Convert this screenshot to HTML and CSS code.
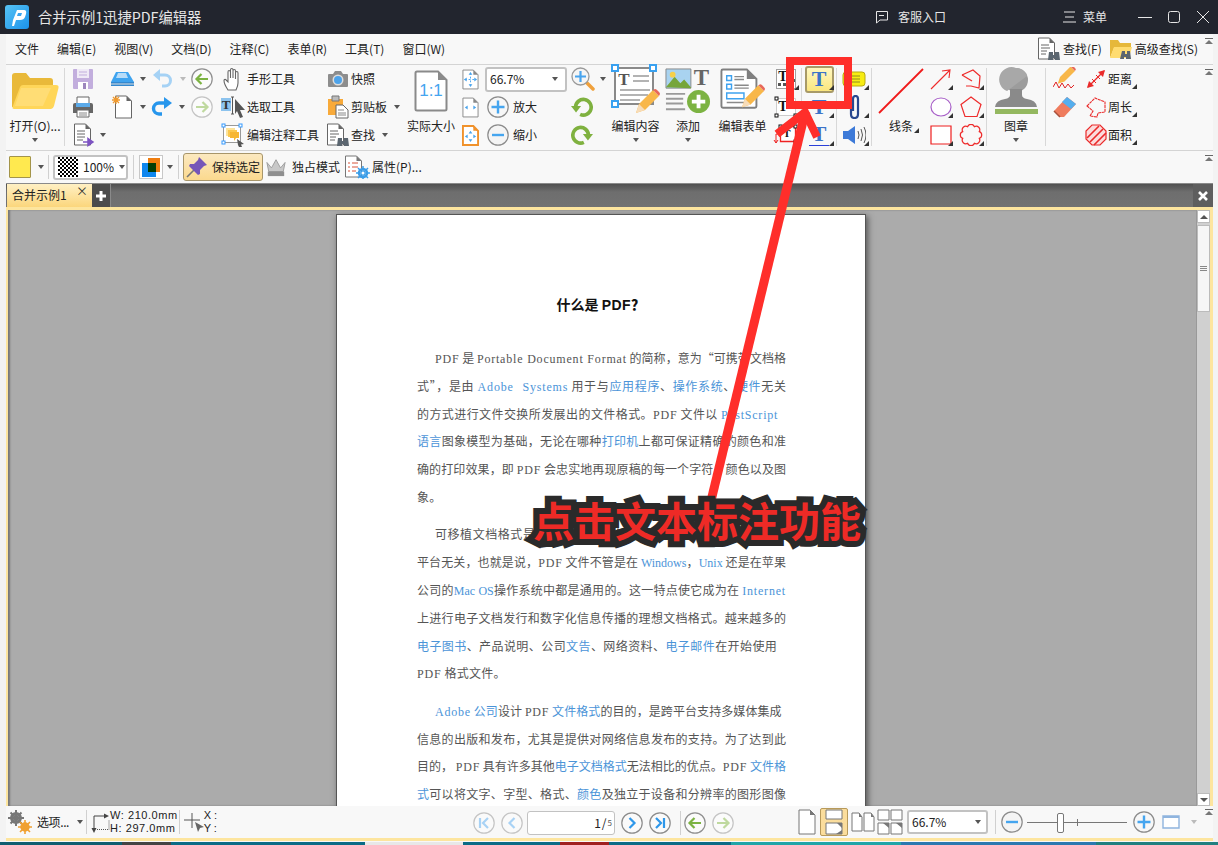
FILE: index.html
```html
<!DOCTYPE html>
<html lang="zh-CN">
<head>
<meta charset="utf-8">
<title>合并示例1迅捷PDF编辑器</title>
<link rel="stylesheet" href="styles.css">
</head>
<body>
<svg class="defs" width="0" height="0">
<defs>
<symbol id="folder" viewBox="0 0 48 38"><path d="M1 35V4q0-3 3-3h11l4 5h20q3 0 3 3v6H12L6 35z" fill="#e9b93a"/><path d="M3 37q-2 0-1.500-2L9 15q1-2 3-2h33q3 0 2.500 3L43 34q-1 3-3 3z" fill="#ffd659"/><path d="M10 16h30l-8 18H4z" fill="#ffe189" opacity=".6"/></symbol>
<symbol id="save" viewBox="0 0 22 22"><path d="M1 2q0-1 1-1h18q1 0 1 1v18q0 1-1 1H2q-1 0-1-1z" fill="#c2aedd"/><path d="M5 1h12v9H5z" fill="#efeaf6"/><path d="M7 4h8M7 7h8" stroke="#c2aedd"/><path d="M6 14h10v7H6z" fill="#fff"/><path d="M11 15h3v6h-3z" fill="#9d87bd"/></symbol>
<symbol id="print" viewBox="0 0 22 22"><path d="M5 1h12v7H5z" fill="#fff" stroke="#666"/><path d="M1 9q0-2 2-2h16q2 0 2 2v8H1z" fill="#666"/><path d="M4 7h14v4H4z" fill="#5aa9e8"/><path d="M5 14h12v7H5z" fill="#fff" stroke="#666"/><path d="M7 17h8M7 19h8" stroke="#888"/></symbol>
<symbol id="export" viewBox="0 0 22 24"><path d="M1.500 1h11l5 5v16h-16z" fill="#fff" stroke="#666"/><path d="M12.500 1l5 5h-5z" fill="#666"/><path d="M4 8h8M4 11h8M4 14h8M4 17h6" stroke="#666"/><path d="M10 19h8M15 15.500l5 3.500-5 3.500z" fill="#7d54c2" stroke="#7d54c2" stroke-width="1.500"/></symbol>
<symbol id="scan" viewBox="0 0 25 16"><path d="M6 1h12l6 10H1z" fill="#3ea3ef"/><path d="M8 2h8l2 5H6z" fill="#b8dcf8"/><path d="M1 11h23v4H1z" fill="#3388cf"/><path d="M1 13h23" stroke="#ddd"/></symbol>
<symbol id="newdoc" viewBox="0 0 22 24"><path d="M4.500 1h11l5 5v17h-16z" fill="#fff" stroke="#666"/><path d="M15.500 1l5 5h-5z" fill="#666"/><path d="M5 1v8M1 5h8M2 2l6 6M8 2L2 8" stroke="#f0992d" stroke-width="1.300"/></symbol>
<symbol id="undo" viewBox="0 0 22 20"><path d="M6 6h7a5.500 5.500 0 0 1 0 11h-3" fill="none" stroke="#a5d2f5" stroke-width="3"/><path d="M8 0v12L1 6z" fill="#a5d2f5"/></symbol>
<symbol id="redo" viewBox="0 0 22 20"><path d="M15 6H8a5.500 5.500 0 0 0 0 11h3" fill="none" stroke="#2796ec" stroke-width="3.400"/><path d="M13 0v12l8-6z" fill="#2796ec"/></symbol>
<symbol id="back" viewBox="0 0 22 22"><circle cx="11" cy="11" r="10.200" fill="#fbfbfb" stroke="#8f8f8f" stroke-width="1.200"/><path d="M17 11H6M10.500 6L5.500 11l5 5" fill="none" stroke="#7cb342" stroke-width="2.200"/></symbol>
<symbol id="forward" viewBox="0 0 22 22"><circle cx="11" cy="11" r="10.200" fill="#fbfbfb" stroke="#c4c4c4" stroke-width="1.200"/><path d="M5 11h11M11.500 6l5 5-5 5" fill="none" stroke="#bfd99f" stroke-width="2.200"/></symbol>
<symbol id="hand" viewBox="0 0 20 24"><path d="M5 23C3 20 1 16 1 13.500c0-1.500 2-1.500 2.500 0L5 15V5c0-2 2-2 2.500 0v6V3c0-2 2.500-2 2.500 0v8V4c0-2 2.500-2 2.500 0v8V6c0-2 2.500-2 2.500 0v10c0 3-1 5-2 7z" fill="#fff" stroke="#666" stroke-width="1.100"/></symbol>
<symbol id="select" viewBox="0 0 25 22"><path d="M0 2h10v13H0z" fill="#8cc3ee"/><text x="5" y="13" class="svgt" font-size="13" text-anchor="middle" fill="#333">T</text><path d="M11.500 1v17M10 1h3M10 18h3" stroke="#555"/><path d="M14 3l10 11-5 0 3 7-3 1-3-7-2 3z" fill="#555"/></symbol>
<symbol id="annot" viewBox="0 0 24 24"><path d="M2.500 2.500h17v17h-17z" fill="#fff" stroke="#999"/><rect x="1" y="1" width="3" height="3" fill="#fff" stroke="#39f"/><rect x="18" y="1" width="3" height="3" fill="#fff" stroke="#39f"/><rect x="1" y="18" width="3" height="3" fill="#fff" stroke="#39f"/><path d="M5 5h9v8H5z" fill="#fde39a"/><path d="M7 7h9v7H7z" fill="#fbc84e"/><path d="M9 9h9v6h-3l-2 3v-3H9z" fill="#f7b733"/><path d="M16 16l7 5-3 .500 1 2.500h-3l-1-2z" fill="#555"/></symbol>
<symbol id="camera" viewBox="0 0 22 18"><path d="M1 5q0-1 1-1h4l2-3h6l2 3h4q1 0 1 1v11q0 1-1 1H2q-1 0-1-1z" fill="#8d8d8d"/><circle cx="11" cy="10" r="5.500" fill="#ddd"/><circle cx="11" cy="10" r="4" fill="#4da3ea"/></symbol>
<symbol id="clip" viewBox="0 0 22 24"><path d="M1 4h15v16H1z" fill="#f8aa3a"/><path d="M5 1h7v5H5z" fill="#bbb" stroke="#777"/><path d="M9 10h7l5 5v8H9z" fill="#fff" stroke="#666"/><path d="M11 15h6M11 18h8M11 20h8" stroke="#888"/></symbol>
<symbol id="find" viewBox="0 0 24 24"><path d="M1.500 1h11l5 5v16h-16z" fill="#fff" stroke="#666"/><path d="M12.500 1l5 5h-5z" fill="#666"/><path d="M4 8h8M4 11h9M4 14h6M4 17h5" stroke="#666"/><path d="M12 15h4v3h2v-3h4l1 8h-5v-2h-2v2h-5z" fill="#5b6670"/></symbol>
<symbol id="oneone" viewBox="0 0 34 42"><path d="M1.500 3Q1.500 1.500 3 1.500h21l8.500 8.500v29q0 1.500-1.500 1.500H3Q1.500 40.500 1.500 39z" fill="#fff" stroke="#8a8a8a" stroke-width="2"/><path d="M24 1.500l8.500 8.500H24z" fill="#8a8a8a"/></symbol>
<symbol id="fitall" viewBox="0 0 18 22"><path d="M1 1h11l5 5v15H1z" fill="#fff" stroke="#888"/><path d="M12 1l5 5h-5z" fill="#888"/><path d="M9 4v13M3 11h12" stroke="#48a4ee" stroke-dasharray="2 2"/><path d="M9 3l-2 3h4zM9 19l-2-3h4zM2 11l3-2v4zM16 11l-3-2v4z" fill="#48a4ee"/></symbol>
<symbol id="fitw" viewBox="0 0 18 22"><path d="M1 1h11l5 5v15H1z" fill="#fff" stroke="#888"/><path d="M12 1l5 5h-5z" fill="#888"/><path d="M3 11l3-2v4zM15 11l-3-2v4z" fill="#48a4ee"/></symbol>
<symbol id="fito" viewBox="0 0 18 22"><path d="M1 1h11l5 5v15H1z" fill="#fff" stroke="#f0922c" stroke-width="2"/><path d="M12 1l5 5h-5z" fill="#f0922c"/><path d="M9 6l-2 3h4zM9 18l-2-3h4zM3 12l3-2v4zM15 12l-3-2v4z" fill="#48a4ee"/></symbol>
<symbol id="zoomin" viewBox="0 0 24 24"><path d="M14 14l8 8" stroke="#f0a13c" stroke-width="3.500" stroke-linecap="round"/><circle cx="9.500" cy="9.500" r="8.500" fill="#f5f5f5" stroke="#999" stroke-width="1.300"/><path d="M9.500 4v11M4 9.500h11" stroke="#48a4ee" stroke-width="2.200"/></symbol>
<symbol id="plusc" viewBox="0 0 22 22"><circle cx="11" cy="11" r="10.200" fill="#f7f7f7" stroke="#8b8b8b" stroke-width="1.200"/><path d="M11 4.500v13M4.500 11h13" stroke="#45a5ef" stroke-width="2.400"/></symbol>
<symbol id="minusc" viewBox="0 0 22 22"><circle cx="11" cy="11" r="10.200" fill="#f4f4f4" stroke="#8b8b8b" stroke-width="1.200"/><path d="M5 11h12" stroke="#45a5ef" stroke-width="2.400"/></symbol>
<symbol id="rotl" viewBox="0 0 24 24"><path d="M5 12a8.500 8.500 0 1 1 5 8" fill="none" stroke="#7fb13f" stroke-width="4"/><path d="M0 11h11l-5.500 7z" fill="#7fb13f"/></symbol>
<symbol id="rotr" viewBox="0 0 24 24"><path d="M19 12a8.500 8.500 0 1 0-5 8" fill="none" stroke="#7fb13f" stroke-width="4"/><path d="M24 11H13l5.500 7z" fill="#7fb13f"/></symbol>
<symbol id="editc" viewBox="0 0 50 54"><path d="M4 4h38v36H4z" fill="#fff" stroke="#8a8a8a" stroke-width="2"/><rect x="1" y="1" width="6" height="6" fill="#fff" stroke="#39a1f0" stroke-width="2"/><rect x="39" y="1" width="6" height="6" fill="#fff" stroke="#39a1f0" stroke-width="2"/><rect x="1" y="37" width="6" height="6" fill="#fff" stroke="#39a1f0" stroke-width="2"/><text x="13" y="21" class="svgt" font-size="17" text-anchor="middle" fill="#555">T</text><path d="M22 12h16M22 17h16M9 26h30M9 31h28M9 36h20" stroke="#9a9a9a" stroke-width="1.600"/><g transform="translate(24 24)"><path d="M1 25l3-9L18 2l6 6L10 22z" fill="#f8b74a"/><path d="M1 25l3-9 6 6z" fill="#f7dcb8"/><path d="M18 2l2-1q1 0 2 1l2 2q1 1 1 2l-1 2z" fill="#e8685a"/></g></symbol>
<symbol id="addc" viewBox="0 0 48 48"><path d="M1 1h26v20H1z" fill="#a9d3f0" stroke="#888"/><path d="M1 20l9-11 6 7 4-4 7 8v1z" fill="#76a53a"/><circle cx="8" cy="7" r="3" fill="#f7d04a"/><text x="38" y="18" class="svgt" font-size="24" text-anchor="middle" fill="#666">T</text><path d="M1 27h20M1 32h18M1 37h18M1 43h20" stroke="#9a9a9a" stroke-width="2"/><circle cx="35" cy="35" r="12" fill="#7cb342"/><path d="M35 28v14M28 35h14" stroke="#fff" stroke-width="4"/></symbol>
<symbol id="formc" viewBox="0 0 48 48"><path d="M1.500 3q0-1.500 1.500-1.500h25l10 10V40q0 1.500-1.500 1.500H3q-1.500 0-1.500-1.500z" fill="#fff" stroke="#808080" stroke-width="2"/><path d="M28 1.500l10 10H28z" fill="#808080"/><path d="M7 8h5v5H7zM7 17h5v5H7zM7 26h18v6H7z" fill="none" stroke="#3ea2ef" stroke-width="1.500"/><path d="M15 9h10M15 12h10M15 18h15M15 21h15M7 36h24" stroke="#8a8a8a" stroke-width="1.500"/><g transform="translate(22 16)"><path d="M1 25l3-9L18 2l6 6L10 22z" fill="#f8b74a"/><path d="M1 25l3-9 6 6z" fill="#f7dcb8"/><path d="M18 2l2-1q1 0 2 1l2 2q1 1 1 2l-1 2z" fill="#e8685a"/></g></symbol>
<symbol id="tqr" viewBox="0 0 24 24"><path d="M2.500 2.500h19v19h-19z" fill="#fff" stroke="#444" stroke-dasharray="1 1"/><text x="9" y="14" class="svgt" font-size="14" text-anchor="middle" font-weight="700" fill="#111">T</text><path d="M4 16h3v3H4zM9 16h3v3H9zM14 12h3v3h-3zM14 17h3v3h-3zM19 12h2v3h-2z" fill="#555"/></symbol>
<symbol id="tbox" viewBox="0 0 24 22"><path d="M2.500 2.500h19v17h-19z" fill="#fff" stroke="#ccc"/><rect x="1" y="1" width="3" height="3" fill="#fff" stroke="#111"/><rect x="20" y="18" width="3" height="3" fill="#fff" stroke="#111"/><rect x="1" y="18" width="3" height="3" fill="#fff" stroke="#111"/><text x="9" y="15" class="svgt" font-size="14" font-weight="700" text-anchor="middle" fill="#111">T</text></symbol>
<symbol id="tcall" viewBox="0 0 26 24"><path d="M7.500 3.500h15v15h-15z" fill="#fff" stroke="#e22" stroke-width="1.300"/><rect x="6" y="2" width="3" height="3" fill="#fff" stroke="#111"/><rect x="21" y="2" width="3" height="3" fill="#fff" stroke="#111"/><rect x="21" y="17" width="3" height="3" fill="#fff" stroke="#111"/><text x="14" y="14" class="svgt" font-size="11" font-weight="700" text-anchor="middle" fill="#111">T</text><path d="M7 11H3v9M1 17l2 3 2-3" fill="none" stroke="#e22"/></symbol>
<symbol id="tblue" viewBox="0 0 20 20"><text x="10" y="17" class="svgt" font-size="22" font-weight="700" text-anchor="middle" fill="#3c74c8">T</text></symbol>
<symbol id="note" viewBox="0 0 24 16"><path d="M4 1h16q3 0 3 3v8q0 3-3 3H4q-3 0-3-3V4q0-3 3-3z" fill="#f7ec12" stroke="#b8aa10"/><path d="M7 5h11M7 8h11M7 11h11" stroke="#8f8a20"/></symbol>
<symbol id="paper" viewBox="0 0 12 24"><path d="M3 7v12q0 4 3.500 4t3.500-4V4q0-3-2.500-3T5 4v12" fill="none" stroke="#28478f" stroke-width="2.200"/></symbol>
<symbol id="sound" viewBox="0 0 24 20"><path d="M1 6h5l7-5v18l-7-5H1z" fill="#3d7ad8"/><path d="M16 6q2 4 0 8M19 4q3 6 0 12M22 2q4 8 0 16" fill="none" stroke="#555"/></symbol>
<symbol id="line" viewBox="0 0 46 46"><path d="M1 45L45 1" stroke="#f01a1a" stroke-width="1.800"/></symbol>
<symbol id="arr" viewBox="0 0 22 22"><path d="M1 21L20 2M12 3l8-1-1 8" fill="none" stroke="#ee2b2b" stroke-width="1.100"/></symbol>
<symbol id="poly1" viewBox="0 0 22 22"><path d="M2 7l11-5 7 6-1 12-8-2-5 0" fill="none" stroke="#ee2b2b" stroke-width="1.200"/><path d="M2 7l10 6" stroke="#ee2b2b" stroke-width="1.200"/></symbol>
<symbol id="ellipse" viewBox="0 0 22 20"><ellipse cx="11" cy="10" rx="10" ry="9" fill="#fff" stroke="#a860c8" stroke-width="1.200"/></symbol>
<symbol id="penta" viewBox="0 0 22 22"><path d="M11 1l10 7.500-4 12H5L1 8.500z" fill="none" stroke="#ee2b2b" stroke-width="1.200"/></symbol>
<symbol id="square" viewBox="0 0 22 20"><path d="M1 1h20v18H1z" fill="#fff" stroke="#ee1f1f" stroke-width="1.200"/></symbol>
<symbol id="cloud" viewBox="0 0 24 22"><path d="M20.300 7.600A3.600 3.600 0 0 1 20.300 14.400A3.600 3.600 0 0 1 15.400 19.300A3.600 3.600 0 0 1 8.600 19.300A3.600 3.600 0 0 1 3.700 14.400A3.600 3.600 0 0 1 3.700 7.600A3.600 3.600 0 0 1 8.600 2.700A3.600 3.600 0 0 1 15.400 2.700A3.600 3.600 0 0 1 20.300 7.600z" fill="none" stroke="#ee2b2b" stroke-width="1.200"/></symbol>
<symbol id="stamp" viewBox="0 0 46 48"><circle cx="23" cy="13" r="12" fill="#9c9c9c"/><path d="M23 1a12 12 0 0 1 11 8L14 24a12 12 0 0 1 9-23z" fill="#a8a8a8"/><path d="M17 22h12v6q0 3 5 4 9 1 10 8H2q1-7 10-8 5-1 5-4z" fill="#8a8a8a"/><path d="M2 42h43v5H2z" fill="#94b860"/></symbol>
<symbol id="squig" viewBox="0 0 24 24"><g transform="translate(4 -2) scale(.75)"><path d="M1 25l3-9L18 2l6 6L10 22z" fill="#f8b74a"/><path d="M18 2l2-1q1 0 2 1l2 2q1 1 1 2l-1 2z" fill="#e8685a"/></g><path d="M0 20l3-5 3 6 3-5 3 5 3-4 3 4 3-3" fill="none" stroke="#e02222"/></symbol>
<symbol id="eraser" viewBox="0 0 24 22"><path d="M1 15L14 1l9 7L11 21H7z" fill="#ef7c5e"/><path d="M14 1l9 7-5 5-9-7z" fill="#55aeed"/><path d="M1 15l6 6" stroke="#a9503b" stroke-width="1.500"/></symbol>
<symbol id="dist" viewBox="0 0 20 20"><path d="M2 18L18 2" stroke="#ea2a2a" stroke-width="1.300"/><path d="M1 19l2-7 5 5zM19 1l-2 7-5-5z" fill="#ea2a2a"/><path d="M6 10l4 4M10 6l4 4" stroke="#ea2a2a"/></symbol>
<symbol id="peri" viewBox="0 0 22 22"><path d="M2 10l8-8 10 4 0 10-7 1-1 4-7-1 3-5z" fill="none" stroke="#ea2a2a" stroke-width="1.100" stroke-dasharray="3 .6"/></symbol>
<symbol id="area" viewBox="0 0 22 22"><path d="M7 1h8l6 6v8l-6 6H7l-6-6V7z" fill="#fbdcdc" stroke="#ea2a2a" stroke-width="1.200"/><path d="M2 14L14 2M5 18L18 5M9 21L21 9" stroke="#ea2a2a" stroke-width="1.600"/></symbol>
<symbol id="pin" viewBox="0 0 22 22"><path d="M1 21l8-8" stroke="#777" stroke-width="1.600"/><path d="M13 1l8 8-3 1-4 4 0 4-2 1-9-9 1-2h4l4-4z" fill="#7656b8"/></symbol>
<symbol id="crown" viewBox="0 0 24 22"><path d="M2 6l5 6 5-9 5 9 5-6-2 10H4z" fill="#c8c8c8" stroke="#999"/><path d="M3 16h18v5H3z" fill="#8f8f8f"/></symbol>
<symbol id="props" viewBox="0 0 26 24"><path d="M1.500 1h11l5 5v16h-16z" fill="#fff" stroke="#777"/><path d="M12.500 1l5 5h-5z" fill="#777"/><path d="M4 8h2M8 8h6M4 12h2M8 12h6M4 16h2M8 16h4" stroke="#d8553b"/><circle cx="19" cy="18" r="4" fill="none" stroke="#3b9de8" stroke-width="2.500"/><path d="M19 11v14M12 18h14M14 13l10 10M24 13L14 23" stroke="#3b9de8" stroke-width="1.500"/><circle cx="19" cy="18" r="1.500" fill="#fff"/></symbol>
<symbol id="gears" viewBox="0 0 24 24"><circle cx="8" cy="8" r="4.500" fill="none" stroke="#777" stroke-width="3"/><path d="M8 0v16M0 8h16M2.500 2.500l11 11M13.500 2.500l-11 11" stroke="#777" stroke-width="2"/><circle cx="17" cy="17" r="3.500" fill="none" stroke="#f0a030" stroke-width="2.500"/><path d="M17 10v14M10 17h14M12 12l10 10M22 12L12 22" stroke="#f0a030" stroke-width="1.600"/></symbol>
<symbol id="dims" viewBox="0 0 20 22"><path d="M3 18V5h11" fill="none" stroke="#444"/><path d="M13 2.500l5 2.500-5 2.500zM.5 17l2.500 5 2.500-5z" fill="#444"/><path d="M6 18.500h12V9" fill="none" stroke="#555" stroke-dasharray="1 1"/></symbol>
<symbol id="cross" viewBox="0 0 22 20"><path d="M8 1v15M0 8h16" stroke="#555"/><path d="M11 10l9 5-4 1-2 4z" fill="#666"/></symbol>
<symbol id="first" viewBox="0 0 22 22"><circle cx="11" cy="11" r="10.200" fill="#fafafa" stroke="#c4c4c4" stroke-width="1.200"/><path d="M7 6v10M15 6l-5 5 5 5" fill="none" stroke="#a8d2f5" stroke-width="2.200"/></symbol>
<symbol id="prev" viewBox="0 0 22 22"><circle cx="11" cy="11" r="10.200" fill="#fafafa" stroke="#c4c4c4" stroke-width="1.200"/><path d="M13.500 6l-5 5 5 5" fill="none" stroke="#a8d2f5" stroke-width="2.200"/></symbol>
<symbol id="next" viewBox="0 0 22 22"><circle cx="11" cy="11" r="10.200" fill="#fafafa" stroke="#8b8b8b" stroke-width="1.200"/><path d="M8.500 6l5 5-5 5" fill="none" stroke="#2e97ea" stroke-width="2.200"/></symbol>
<symbol id="last" viewBox="0 0 22 22"><circle cx="11" cy="11" r="10.200" fill="#fafafa" stroke="#8b8b8b" stroke-width="1.200"/><path d="M15 6v10M7 6l5 5-5 5" fill="none" stroke="#2e97ea" stroke-width="2.200"/></symbol>
<symbol id="pg1" viewBox="0 0 18 26"><path d="M1 1h11l5 5v19H1z" fill="#fff" stroke="#777"/><path d="M12 1l5 5h-5z" fill="#777"/></symbol>
<symbol id="pgcont" viewBox="0 0 18 26"><path d="M1 1h16v9H1zM1 14h16v11H1z" fill="#fff" stroke="#777"/><path d="M12 14l5 5v-5zM11 25h6v-4z" fill="#777"/></symbol>
<symbol id="pg2" viewBox="0 0 24 20"><path d="M1 1h7l3 4v14H1zM13 1h7l3 4v14H13z" fill="#fff" stroke="#777"/><path d="M8 1l3 4H8zM20 1l3 4h-3z" fill="#777"/></symbol>
<symbol id="pg4" viewBox="0 0 26 26"><path d="M1 1h11v10H1zM14 1h11v10H14zM1 14h11v11H1zM14 14h11v11H14z" fill="#fff" stroke="#777"/><path d="M6 14l6 5v-5zM19 14l6 5v-5z" fill="#777"/></symbol>
<symbol id="win" viewBox="0 0 18 14"><path d="M1 1h16v12H1z" fill="#fff" stroke="#8fb4de" stroke-width="1.400"/><path d="M1 2h16" stroke="#8fb4de" stroke-width="2"/></symbol>
</defs>
</svg>

<div class="app">
  <header class="titlebar">
    <div class="logo"><svg width="24" height="24" viewBox="0 0 24 24"><path d="M7 21l1-6 4-10h7q3 0 2 4l-1 3q-1 3-5 3h-4l-2 6z" fill="#fff"/><path d="M13 8h4l-1 3h-4z" fill="#3ba4ee"/></svg></div>
    <span class="apptitle">合并示例1迅捷PDF编辑器</span>
    <div class="winright">
      <span class="titleact act1"><svg width="14" height="14" viewBox="0 0 14 14"><path d="M1.500 1.500h11v8.500H5l-3.500 3z" fill="none" stroke="#e6e6e6"/><path d="M4 5.500h5" stroke="#e6e6e6"/></svg>客服入口</span>
      <span class="titleact act2"><svg width="13" height="12" viewBox="0 0 13 12"><path d="M1 1h11M2 6h9M0 11h13" stroke="#e6e6e6"/></svg>菜单</span>
      <svg class="wbtn" width="14" height="14" viewBox="0 0 14 14"><path d="M0 7.500h14" stroke="#e6e6e6"/></svg>
      <svg class="wbtn" width="14" height="14" viewBox="0 0 14 14"><rect x="1.500" y="1.500" width="11" height="11" rx="2" fill="none" stroke="#e6e6e6"/></svg>
      <svg class="wbtn" width="14" height="14" viewBox="0 0 14 14"><path d="M1 1l12 12M13 1L1 13" stroke="#e6e6e6"/></svg>
    </div>
  </header>

  <div class="shell">
    <nav class="menubar">
      <span>文件</span><span>编辑(E)</span><span>视图(V)</span><span>文档(D)</span><span>注释(C)</span><span>表单(R)</span><span>工具(T)</span><span>窗口(W)</span>
      <div class="menuright">
        <svg width="24" height="24"><use href="#find"/></svg><span>查找(F)</span>
        <svg class="gap2" width="24" height="22" viewBox="0 0 24 22"><path d="M1 20V2h8l2 3h11v5H5z" fill="#e6b83a"/><path d="M1 20l4-11h18l-3 11z" fill="#ffdc70"/><path d="M13 13h3v3h2v-3h3l1 8h-5v-2h-2v2h-4z" fill="#5b6670"/></svg><span>高级查找(S)</span>
      </div>
      <i class="collapse"></i>
    </nav>

    <section class="ribbon">
      <div class="big span3"><div class="bigicon"><svg width="48" height="38"><use href="#folder"/></svg></div><span>打开(O)...</span><i class="caret"></i></div>
      <div class="sep span3"></div>

      <div class="cell pl7"><svg width="22" height="22"><use href="#save"/></svg></div>
      <div class="cell pl7"><svg width="22" height="22"><use href="#print"/></svg></div>
      <div class="cell pl8"><svg width="22" height="24"><use href="#export"/></svg><i class="caret ml5"></i></div>

      <div class="cell"><svg width="25" height="16"><use href="#scan"/></svg><i class="caret ml5"></i></div>
      <div class="cell"><svg class="ml1" width="22" height="24"><use href="#newdoc"/></svg><i class="caret ml7"></i></div>
      <div class="cell"></div>

      <div class="cell"><svg class="ml2" width="22" height="20"><use href="#undo"/></svg><i class="caret pale ml6"></i></div>
      <div class="cell"><svg class="ml1" width="22" height="20"><use href="#redo"/></svg><i class="caret ml6"></i></div>
      <div class="cell"></div>

      <div class="cell ctr"><svg width="22" height="22"><use href="#back"/></svg></div>
      <div class="cell ctr"><svg width="22" height="22"><use href="#forward"/></svg></div>
      <div class="cell"></div>

      <div class="cell lab"><span class="ibox i28"><svg width="20" height="24"><use href="#hand"/></svg></span><span>手形工具</span></div>
      <div class="cell lab"><span class="ibox i28"><svg width="25" height="22"><use href="#select"/></svg></span><span>选取工具</span></div>
      <div class="cell lab"><span class="ibox i28"><svg width="24" height="24"><use href="#annot"/></svg></span><span>编辑注释工具</span></div>

      <div class="cell lab2"><span class="ibox i26"><svg width="22" height="18"><use href="#camera"/></svg></span><span>快照</span></div>
      <div class="cell lab2"><span class="ibox i26"><svg width="22" height="24"><use href="#clip"/></svg></span><span>剪贴板</span><i class="caret ml7"></i></div>
      <div class="cell lab2"><span class="ibox i26"><svg width="24" height="24"><use href="#find"/></svg></span><span>查找</span><i class="caret ml7"></i></div>

      <div class="big span3 nocaret"><div class="bigicon"><svg class="oneone" width="34" height="42"><use href="#oneone"/></svg><b class="ratio">1:1</b></div><span>实际大小</span></div>

      <div class="cell ctr"><svg width="17" height="21"><use href="#fitall"/></svg></div>
      <div class="cell ctr"><svg width="17" height="21"><use href="#fitw"/></svg></div>
      <div class="cell ctr"><svg width="17" height="21"><use href="#fito"/></svg></div>

      <div class="cell pl1"><div class="combo zoomcombo"><span>66.7%</span><i class="caret"></i></div></div>
      <div class="cell pl3"><svg width="22" height="22"><use href="#plusc"/></svg><span class="ml4">放大</span></div>
      <div class="cell pl3"><svg width="22" height="22"><use href="#minusc"/></svg><span class="ml4">缩小</span></div>

      <div class="cell pl2"><svg width="24" height="24"><use href="#zoomin"/></svg><i class="caret ml5"></i></div>
      <div class="cell pl2"><svg width="22" height="22"><use href="#rotl"/></svg></div>
      <div class="cell pl2"><svg width="22" height="22"><use href="#rotr"/></svg></div>

      <div class="big span3"><div class="bigicon"><svg width="50" height="54"><use href="#editc"/></svg></div><span>编辑内容</span><i class="caret"></i></div>
      <div class="big span3"><div class="bigicon"><svg width="46" height="46"><use href="#addc"/></svg></div><span>添加</span><i class="caret"></i></div>
      <div class="big span3 nocaret"><div class="bigicon"><svg width="46" height="46"><use href="#formc"/></svg></div><span>编辑表单</span></div>

      <div class="cell ctr corner"><svg width="24" height="24"><use href="#tqr"/></svg></div>
      <div class="cell ctr corner"><svg width="24" height="22"><use href="#tbox"/></svg></div>
      <div class="cell ctr corner"><svg width="26" height="24"><use href="#tcall"/></svg></div>
      <div class="sep span3"></div>

      <div class="cell ctr corner"><span class="activebtn"><svg width="20" height="20"><use href="#tblue"/></svg></span></div>
      <div class="cell ctr corner"><svg width="20" height="20"><use href="#tblue"/></svg></div>
      <div class="cell ctr corner"><span class="tunder"><svg width="20" height="20"><use href="#tblue"/></svg></span></div>
      <div class="sep span3"></div>

      <div class="cell ctr corner"><svg width="24" height="16"><use href="#note"/></svg></div>
      <div class="cell ctr corner"><svg width="12" height="24"><use href="#paper"/></svg></div>
      <div class="cell ctr corner"><svg width="24" height="20"><use href="#sound"/></svg></div>
      <div class="sep span3"></div>

      <div class="big span3 nocaret corner2"><div class="bigicon"><svg width="46" height="46"><use href="#line"/></svg></div><span>线条</span></div>

      <div class="cell ctr corner"><svg width="22" height="22"><use href="#arr"/></svg></div>
      <div class="cell ctr corner"><svg width="22" height="20"><use href="#ellipse"/></svg></div>
      <div class="cell ctr corner"><svg width="22" height="20"><use href="#square"/></svg></div>

      <div class="cell ctr corner"><svg width="22" height="22"><use href="#poly1"/></svg></div>
      <div class="cell ctr corner"><svg width="22" height="22"><use href="#penta"/></svg></div>
      <div class="cell ctr corner"><svg width="24" height="22"><use href="#cloud"/></svg></div>
      <div class="sep span3"></div>

      <div class="big span3"><div class="bigicon"><svg width="46" height="48"><use href="#stamp"/></svg></div><span>图章</span><i class="caret"></i></div>
      <div class="sep span3"></div>

      <div class="cell ctr"><svg width="24" height="24"><use href="#squig"/></svg></div>
      <div class="cell ctr"><svg width="24" height="22"><use href="#eraser"/></svg></div>
      <div class="cell"></div>

      <div class="cell meas"><span class="ibox i25"><svg width="20" height="20"><use href="#dist"/></svg></span><span>距离</span></div>
      <div class="cell meas"><span class="ibox i25"><svg width="22" height="22"><use href="#peri"/></svg></span><span>周长</span></div>
      <div class="cell meas"><span class="ibox i25"><svg width="22" height="22"><use href="#area"/></svg></span><span>面积</span></div>
      <i class="collapse"></i>
    </section>

    <section class="propbar">
      <span class="swatch"></span><i class="caret ml7"></i><span class="vsep v1"></span>
      <div class="combo opacity"><svg width="20" height="20" viewBox="0 0 20 20"><defs><pattern id="chk" width="4" height="4" patternUnits="userSpaceOnUse"><path d="M0 0h2v2H0zM2 2h2v2H2z" fill="#000"/></pattern></defs><rect width="20" height="20" fill="url(#chk)"/></svg><span>100%</span><i class="caret"></i></div>
      <span class="vsep v2"></span>
      <span class="colorbox"><svg width="20" height="20" viewBox="0 0 20 20"><path d="M7 1h12v14H7z" fill="#f07d0e"/><path d="M1 6h14v14H1z" fill="#1087ee"/><path d="M7 6h8v9H7z" fill="#033d05"/></svg></span><i class="caret ml4"></i><span class="vsep v3"></span>
      <button class="keep"><svg width="22" height="22"><use href="#pin"/></svg><span>保持选定</span></button>
      <svg class="crown" width="22" height="20"><use href="#crown"/></svg><span class="ml5">独占模式</span>
      <svg class="props" width="26" height="24"><use href="#props"/></svg><span>属性(P)...</span>
      <i class="collapse"></i>
    </section>

    <div class="tabbar">
      <div class="tab"><span>合并示例1</span><em>×</em></div>
      <div class="addtab"><svg width="10" height="10" viewBox="0 0 10 10"><path d="M5 0v10M0 5h10" stroke="#fff" stroke-width="3"/></svg></div>
      <div class="tabfill"></div>
      <div class="closetab"><svg width="10" height="10" viewBox="0 0 10 10"><path d="M1 1l8 8M9 1l-8 8" stroke="#fff" stroke-width="2.600"/></svg></div>
    </div>

    <main class="workspace">
      <div class="canvas">
        <article class="page">
          <h1>什么是 <b>PDF？</b></h1>
          <div class="para">
            <p class="first"><span class="l">PDF</span> 是 <span class="l">Portable Document Format</span> 的简称，意为“可携带文档格</p>
            <p>式”，是由 <a class="l">Adobe &nbsp;Systems</a> 用于与<a>应用程序</a>、<a>操作系统</a>、<a>硬件</a>无关</p>
            <p class="free wide"><span>的方式进行文件交换所发展出的文件格式。</span><span class="l">PDF</span> 文件以 <a class="l">PostScript</a></p>
            <p><a>语言</a>图象模型为基础，无论在哪种<a>打印机</a>上都可保证精确的颜色和准</p>
            <p>确的打印效果，即 <span class="l">PDF</span> 会忠实地再现原稿的每一个字符、颜色以及图</p>
            <p class="free">象。</p>
          </div>
          <div class="para">
            <p class="first">可移植文档格式是一种电子文件格式。这种文件格式与操作系统</p>
            <p>平台无关，也就是说，<span class="l">PDF</span> 文件不管是在 <a class="l t">Windows</a>，<a class="l t">Unix</a> 还是在苹果</p>
            <p>公司的<a class="l t">Mac OS</a>操作系统中都是通用的。这一特点使它成为在 <a class="l">Internet</a></p>
            <p>上进行电子文档发行和数字化信息传播的理想文档格式。越来越多的</p>
            <p class="free wide"><a>电子图书</a>、产品说明、公司<a>文告</a>、网络资料、<a>电子邮件</a>在开始使用</p>
            <p class="free"><span class="l">PDF</span> 格式文件。</p>
          </div>
          <div class="para">
            <p class="first free tightline"><a class="l">Adobe</a> <a>公司</a>设计 <span class="l">PDF</span> <a>文件格式</a>的目的，是跨平台支持多媒体集成</p>
            <p>信息的出版和发布，尤其是提供对网络信息发布的支持。为了达到此</p>
            <p>目的， <span class="l">PDF</span> 具有许多其他<a>电子文档格式</a>无法相比的优点。<span class="l">PDF</span> <a>文件格</a></p>
            <p><a>式</a>可以将文字、字型、格式、<a>颜色</a>及独立于设备和分辨率的图形图像</p>
          </div>
        </article>
      </div>
      <div class="scrollbar">
        <div class="sbtn"><i class="up"></i></div>
        <div class="thumb"><s></s></div>
        <div class="strack"></div>
        <div class="sbtn"><i class="down"></i></div>
      </div>
    </main>

    <footer class="statusbar">
      <svg class="ml2" width="24" height="24"><use href="#gears"/></svg>
      <span class="opt">选项...</span><i class="caret c2"></i><span class="vsep s1"></span>
      <svg class="dimicon" width="20" height="22"><use href="#dims"/></svg>
      <div class="dims"><span>W: 210.0mm</span><span>H: 297.0mm</span></div><span class="vsep s2"></span>
      <svg class="ml4" width="22" height="20"><use href="#cross"/></svg>
      <div class="coords"><span>X :</span><span>Y :</span></div>
      <div class="nav">
        <svg width="22" height="22"><use href="#first"/></svg>
        <svg width="22" height="22"><use href="#prev"/></svg>
        <div class="pageinput"><span>1</span><span>/</span><small>5</small></div>
        <svg width="22" height="22"><use href="#next"/></svg>
        <svg width="22" height="22"><use href="#last"/></svg>
        <span class="vsep s3"></span>
        <svg width="22" height="22"><use href="#back"/></svg>
        <svg width="22" height="22"><use href="#forward"/></svg>
      </div>
      <div class="view">
        <svg width="18" height="26"><use href="#pg1"/></svg>
        <span class="viewon"><svg width="18" height="26"><use href="#pgcont"/></svg></span>
        <svg width="24" height="20"><use href="#pg2"/></svg>
        <svg width="26" height="26"><use href="#pg4"/></svg>
        <div class="combo statuscombo"><span>66.7%</span><i class="caret"></i></div>
        <span class="vsep s4"></span>
        <svg width="22" height="22"><use href="#minusc"/></svg>
        <div class="slider"><i class="tick"></i><i class="knob"></i></div>
        <svg width="22" height="22"><use href="#plusc"/></svg>
        <svg class="ml7" width="18" height="14"><use href="#win"/></svg>
        <i class="caret pale c3"></i>
      </div>
      <i class="collapse"></i>
    </footer>
    <div class="yellowline"></div>
  </div>
  <div class="desktop"></div>
</div>

<svg class="overlay" width="1218" height="845" viewBox="0 0 1218 845">
  <rect x="790" y="61" width="58" height="44" fill="none" stroke="#ff2e2a" stroke-width="8"/>
  <path d="M710 505L805 113" stroke="#ff2e2a" stroke-width="9"/>
  <path d="M808 110L777 134M804 110L817 137" stroke="#ff2e2a" stroke-width="8"/>
</svg>
<div class="callout">点击文本标注功能</div>
</body>
</html>
```
FILE: styles.css
```css
* { box-sizing: border-box; }
html, body { margin: 0; padding: 0; width: 1218px; height: 845px; overflow: hidden; }
body { position: relative; background: #f3f3f3; font: 12px/1.2 "Noto Sans CJK SC", "Liberation Sans", sans-serif; color: #222; }
.defs { position: absolute; }
.svgt { font-family: "Liberation Serif", serif; font-weight: 700; }
svg { display: block; flex: none; }
i, em, s { font-style: normal; text-decoration: none; }

.app { display: flex; flex-direction: column; width: 1218px; height: 845px; }
.titlebar { flex: none; height: 34px; display: flex; align-items: center; padding-left: 5px; background: #22252e; color: #e6e6e6; }
.logo { width: 24px; height: 24px; border-radius: 3px; background: linear-gradient(135deg, #57c3f5, #1b92ea); }
.apptitle { margin-left: 9px; font-size: 14.300px; }
.winright { margin-left: auto; display: flex; align-items: center; }
.titleact { display: flex; align-items: center; gap: 9px; }
.act1 { margin-right: 117px; }
.act2 { margin-right: 31px; gap: 7px; }
.wbtn + .wbtn { margin-left: 15px; }
.wbtn:last-child { margin-right: 8px; }

.shell { flex: none; height: 808px; margin: 0 5px 0 6px; display: flex; flex-direction: column; background: #f8f8f8; position: relative; }
.menubar { flex: none; height: 31px; display: flex; align-items: center; gap: 18px; padding-left: 9px; border-bottom: 1px solid #d4d4d4; position: relative; }
.menuright { margin-left: auto; margin-right: 15px; display: flex; align-items: center; }
.gap2 { margin-left: 7px; }
.menuright span { margin-left: 2px; }
.collapse { position: absolute; right: 0; top: 4px; width: 8px; height: 6px; border-top: 1px solid #666; }
.collapse::after { content: ""; position: absolute; left: 0; top: 1px; border: 4px solid transparent; border-top: 0; border-bottom: 4px solid #777; }

.ribbon { flex: none; height: 86px; display: grid; grid-auto-flow: column; position: relative; border-bottom: 1px solid #d4d4d4;
  grid-template-rows: 28px 28px 28px;
  grid-template-columns: 58px 1px 45px 40px 39px 25px 109px 82px 52px 27px 85px 40px 53px 52px 57px 30px 1px 34px 1px 34px 1px 54px 29px 31px 1px 58px 1px 37px 62px; }
.cell { display: flex; align-items: center; position: relative; min-width: 0; white-space: nowrap; }
.ctr { justify-content: center; }
.span3 { grid-row: 1 / span 3; }
.sep { width: 1px; background: #d8d8d8; margin: 3px 0; }
.pl1 { padding-left: 1px; } .pl2 { padding-left: 2px; } .pl3 { padding-left: 3px; } .pl7 { padding-left: 7px; } .pl8 { padding-left: 8px; }
.ml1 { margin-left: 1px; } .ml2 { margin-left: 2px; } .ml3 { margin-left: 3px; } .ml4 { margin-left: 4px; } .ml5 { margin-left: 5px; } .ml6 { margin-left: 6px; } .ml7 { margin-left: 7px; }
.ibox { display: flex; justify-content: center; align-items: center; flex: none; }
.i28 { width: 28px; } .i26 { width: 26px; } .i25 { width: 25px; }
.lab { padding-left: 5px; }
.lab2 { padding-left: 2px; }
.meas::after, .corner::after, .corner2::after { content: ""; position: absolute; width: 0; height: 0; border-style: solid; border-width: 0 0 5px 5px; border-color: transparent transparent #333 transparent; }
.corner::after { right: 2px; bottom: 3px; }
.meas::after { left: 49px; bottom: 4px; }
.corner2 { padding-left: 4px; }
.corner2::after { right: 7px; bottom: 16px; }
.big { display: grid; grid-template-rows: 52px 18px 10px; justify-items: center; align-items: center; white-space: nowrap; position: relative; }
.bigicon { display: flex; align-items: center; justify-content: center; height: 52px; position: relative; }
.ratio { position: absolute; left: 0; right: 0; top: 16px; text-align: center; font: 400 17px/1.2 "Liberation Sans", sans-serif; color: #45a5ef; }
.caret { display: inline-block; flex: none; width: 0; height: 0; border: 3.500px solid transparent; border-top: 4px solid #555; border-bottom: 0; }
.caret.pale { border-top-color: #bbb; }
.activebtn { width: 29px; height: 27px; display: flex; align-items: center; justify-content: center; border: 2px solid #a89a68; border-radius: 3px; background: linear-gradient(#fff8c0, #fbe67e); }
.tunder { display: block; border-bottom: 1px solid #2a3fd8; padding-bottom: 1px; }

.combo { display: flex; align-items: center; background: #fff; border: 2px solid #c2c2c2; border-radius: 3px; }
.combo .caret { margin-left: auto; }
.zoomcombo { width: 82px; height: 25px; padding: 0 7px 0 3px; font-size: 12px; }

.propbar { flex: none; height: 32px; display: flex; align-items: center; position: relative; padding-left: 3px; }
.swatch { width: 22px; height: 22px; background: #ffe94f; border: 1px solid #a3944a; border-radius: 1px; }
.vsep { flex: none; width: 1px; height: 24px; background: #d0d0d0; }
.v1 { margin: 0 4px 0 4px; }
.opacity { width: 75px; height: 25px; padding: 0 4px 0 3px; gap: 5px; }
.v2 { margin: 0 5px; }
.colorbox { padding: 1px; border: 1px solid #c8c8c8; width: 24px; height: 24px; background: #fff; }
.v3 { margin: 0 4px 0 5px; }
.keep { font: inherit; color: #222; width: 80px; height: 28px; display: flex; align-items: center; gap: 4px; padding: 0 0 0 2px; border: 1px solid #a8966a; border-radius: 3px; background: linear-gradient(#fce9c0, #fbd98e); }
.crown { margin-left: 2px; }
.props { margin: 0 2px 0 4px; }

.tabbar { flex: none; height: 24px; display: flex; background: linear-gradient(#505050, #6e6e6e 35%, #727272); border-top: 1px solid #8a8a8a; }
.tab { width: 85px; margin-left: 1px; display: flex; align-items: center; padding-left: 5px; background: linear-gradient(#fff0c4, #fbd67c); position: relative; }
.tab em { position: absolute; right: 4px; top: 1px; font-size: 12px; line-height: 12px; color: #333; }
.addtab { width: 19px; display: flex; align-items: center; justify-content: center; background: #4c4c4c; border-right: 1px solid #8a8a8a; }
.tabfill { flex: 1; }
.closetab { width: 20px; background: #5e5e5e; display: flex; align-items: center; justify-content: center; }

.workspace { flex: none; height: 599px; display: flex; overflow: hidden; border-top: 3px solid #fde59e; border-right: 3px solid #fde59e; border-left: 2px solid #fde59e; }
.canvas { flex: 1; min-width: 0; background: #ababab; box-shadow: inset 2px 0 2px #777; padding-top: 4px; display: flex; justify-content: center; overflow: hidden; }
.page { flex: none; width: 530px; height: 800px; margin-right: 2px; padding: 79px 0 0 80px; background: #fff; border: 1px solid #555; box-shadow: 2px 2px 6px #555; }
.page h1 { margin: 0 0 30px; padding-right: 80px; height: 20px; text-align: center; font: 700 14px/20px "Noto Sans CJK SC", sans-serif; color: #111; }
.page h1 b { font-family: "Liberation Sans", "Noto Sans CJK SC", sans-serif; letter-spacing: .4px; }
.para { margin-bottom: 9.600px; width: 369px; }
.page p { margin: 0; height: 27.800px; line-height: 27.800px; font-size: 12px; color: #555; white-space: nowrap; text-align: justify; text-align-last: justify; }
.page p.first { padding-left: 18px; }
.page p.free { text-align-last: left; letter-spacing: .27px; }
.page p.wide { letter-spacing: .42px; }
.page p.tightline { letter-spacing: .08px; }
.page a { color: #4b94d8; }
.page .l { font-family: "Liberation Serif", serif; font-size: 12px; letter-spacing: .8px; }
.page .t { letter-spacing: 0; }

.scrollbar { flex: none; width: 14px; display: flex; flex-direction: column; background: #d0d0d0; border-left: 1px solid #999; }
.sbtn { flex: none; height: 13px; background: #fff; border: 1px solid #bbb; display: flex; align-items: center; justify-content: center; }
.up, .down { width: 0; height: 0; border: 4px solid transparent; }
.up { border-top: 0; border-bottom: 4px solid #555; }
.down { border-bottom: 0; border-top: 4px solid #555; }
.thumb { flex: none; height: 87px; margin-top: 2px; background: #f6f6f6; border: 1px solid #bbb; display: flex; align-items: center; justify-content: center; }
.thumb s { width: 7px; height: 5px; border-top: 1px solid #888; border-bottom: 1px solid #888; position: relative; }
.thumb s::after { content: ""; position: absolute; left: 0; right: 0; top: 1px; border-top: 1px solid #888; }
.strack { flex: 1; }

.statusbar { flex: none; height: 32px; display: flex; align-items: center; position: relative; }
.opt { margin-left: 5px; letter-spacing: -.4px; }
.c2 { margin: 0 3px 0 8px; }
.dimicon { margin-left: 4px; }
.dims { display: flex; flex-direction: column; margin-left: -1px; font: 11px/13px "Liberation Sans", sans-serif; letter-spacing: .55px; }
.s2 { margin-left: 1px; }
.coords { display: flex; flex-direction: column; margin-left: -2px; font: 11px/13px "Liberation Sans", sans-serif; }
.nav { position: absolute; left: 467px; top: 5px; display: flex; align-items: center; gap: 6px; }
.pageinput { width: 88px; height: 24px; margin-left: -2px; background: #fff; border: 1px solid #c2c2c2; border-radius: 3px; display: flex; align-items: center; justify-content: flex-end; padding-right: 2px; font-size: 12px; gap: 1px; }
.pageinput small { font-size: 8px; color: #555; }
.s3 { margin: 0 -3px 0 3px; }
.view { position: absolute; left: 792px; top: 3px; display: flex; align-items: center; height: 26px; }
.viewon { width: 28px; height: 28px; margin: 0 3px 0 4px; display: flex; align-items: center; justify-content: center; background: #fbdd9c; border: 1px solid #b89a5a; border-radius: 2px; }
.view > svg:nth-child(3) { margin-right: 2px; }
.statuscombo { width: 81px; height: 24px; margin-left: 4px; padding: 0 5px 0 3px; }
.s4 { margin: 0 5px 0 7px; }
.slider { position: relative; width: 100px; height: 22px; margin: 0 6px 0 4px; }
.slider::before { content: ""; position: absolute; left: 0; right: 0; top: 11px; border-top: 1px solid #777; }
.tick { position: absolute; left: 50px; top: 8px; height: 7px; border-left: 1px solid #777; }
.knob { position: absolute; left: 30px; top: 2px; width: 7px; height: 20px; background: #fff; border: 1px solid #777; border-radius: 2px; }
.c3 { margin-left: 11px; }
.statusbar .collapse { top: 3px; }

.yellowline { flex: none; height: 3px; background: #fde59e; }
.desktop { flex: none; height: 3px; background: linear-gradient(90deg, #0f5d70 0 10%, #444 10% 14%, #0a6b86 14% 30%, #e8e8e8 30% 38%, #0a6b86 38% 46%, #a02020 46% 50%, #0a6b86 50% 60%, #20a5a8 60% 74%, #2a79b0 74% 90%, #208080 90%); }

.overlay { position: absolute; left: 0; top: 0; pointer-events: none; }
.callout { position: absolute; left: 533px; top: 490px; font: 700 41px/58px "Noto Sans CJK SC", sans-serif; color: #ee2a26; -webkit-text-stroke: 12px #2a2a2a; paint-order: stroke fill; white-space: nowrap; }
```
